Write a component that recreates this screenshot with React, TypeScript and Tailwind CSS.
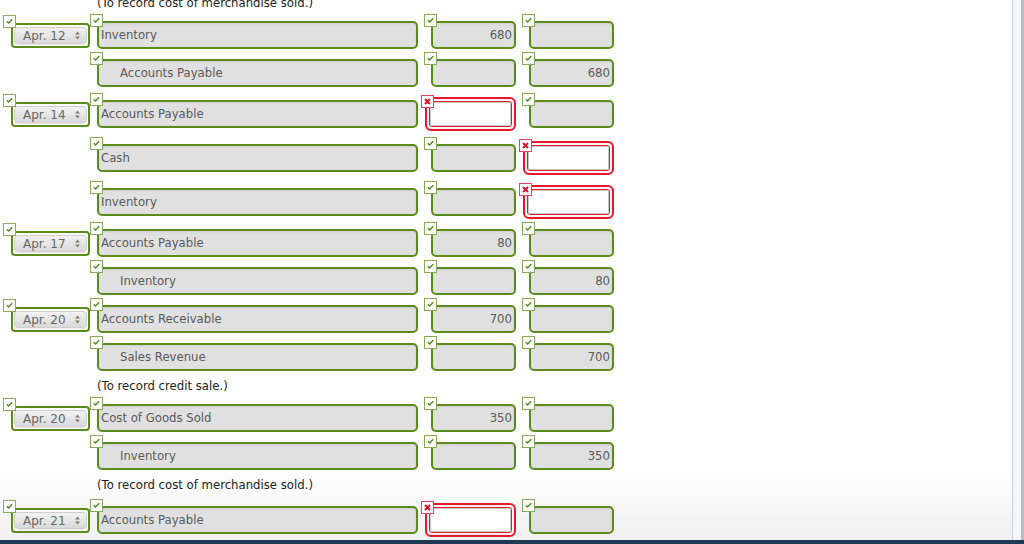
import React from "react";

type Cell = { text?: string; red?: boolean };
type Row = {
  kind: "row";
  date?: string;
  account: string;
  indent?: boolean;
  debit: Cell;
  credit: Cell;
};
type Note = { kind: "note"; text: string; first?: boolean };

const FONT = { fontFamily: '"DejaVu Sans", Verdana, sans-serif' };

function Check() {
  return (
    <svg width="13" height="13" viewBox="0 0 13 13" className="block">
      <rect x="0.5" y="0.5" width="12" height="12" fill="#fff" stroke="#86a95a" />
      <path d="M3.8 6.3 L5.6 8 L9.2 4.3" stroke="#4d8a1e" strokeWidth="1.4" fill="none" />
    </svg>
  );
}

function XMark() {
  return (
    <svg width="13" height="13" viewBox="0 0 13 13" className="block">
      <rect x="0.5" y="0.5" width="12" height="12" fill="#fff" stroke="#e8455a" />
      <path d="M4 4 L9 9 M9 4 L4 9" stroke="#e0102a" strokeWidth="2" fill="none" />
    </svg>
  );
}

function GreenBox({ text, align = "left", indent = false, width }: { text?: string; align?: "left" | "right"; indent?: boolean; width: string }) {
  return (
    <div className={`relative shrink-0 ${width}`}>
      <div className="absolute -left-[7px] -top-[7px] z-10">
        <Check />
      </div>
      <div
        className={`flex h-[28px] items-center rounded-[5px] border-2 border-[#5a8c1c] bg-[#e0e0e0] text-[11.7px] text-[#5a5a5a] shadow-[inset_0_1px_2px_rgba(0,0,0,0.08)] ${
          align === "right" ? "justify-end pr-[2px]" : indent ? "pl-[21px]" : "pl-[2px]"
        }`}
      >
        <span className="relative top-[1px]">{text}</span>
      </div>
    </div>
  );
}

function RedBox() {
  return (
    <div className="relative w-[91px] shrink-0">
      <div className="absolute -left-[4px] -top-[2px] z-10">
        <XMark />
      </div>
      <div className="h-[34px] rounded-[6px] border-2 border-[#e5182e] bg-[#fff4f5] p-[2px]">
        <div className="h-full rounded-[3px] border border-[#e5182e] bg-white p-0">
          <div className="h-full rounded-[2px] border border-[#c9c9c9] bg-white" />
        </div>
      </div>
    </div>
  );
}

function DateBox({ date }: { date: string }) {
  return (
    <div className="relative w-[79px] shrink-0">
      <div className="absolute -left-[8px] -top-[8px] z-10">
        <Check />
      </div>
      <div className="flex h-[25px] items-center rounded-[4px] border-2 border-[#5a8c1c] bg-white px-[1px]">
        <div className="flex h-[17px] w-full items-center justify-between rounded-[4px] border border-[#cfcfcf] bg-[linear-gradient(to_bottom,#f2f2f2,#d9d9d9)] pl-[8px] pr-[6px] text-[12px] text-[#666] shadow-[0_1px_1px_rgba(0,0,0,0.1)]">
          <span className="relative top-[1px]">{date}</span>
          <svg width="5" height="9" viewBox="0 0 5 9" className="block">
            <path d="M2.5 0.5 L4.8 3.6 L0.2 3.6 Z" fill="#777" />
            <path d="M2.5 8.5 L4.8 5.4 L0.2 5.4 Z" fill="#777" />
          </svg>
        </div>
      </div>
    </div>
  );
}

const items: (Row | Note)[] = [
  { kind: "note", text: "(To record cost of merchandise sold.)", first: true },
  { kind: "row", date: "Apr. 12", account: "Inventory", debit: { text: "680" }, credit: {} },
  { kind: "row", account: "Accounts Payable", indent: true, debit: {}, credit: { text: "680" } },
  { kind: "row", date: "Apr. 14", account: "Accounts Payable", debit: { red: true }, credit: {} },
  { kind: "row", account: "Cash", debit: {}, credit: { red: true } },
  { kind: "row", account: "Inventory", debit: {}, credit: { red: true } },
  { kind: "row", date: "Apr. 17", account: "Accounts Payable", debit: { text: "80" }, credit: {} },
  { kind: "row", account: "Inventory", indent: true, debit: {}, credit: { text: "80" } },
  { kind: "row", date: "Apr. 20", account: "Accounts Receivable", debit: { text: "700" }, credit: {} },
  { kind: "row", account: "Sales Revenue", indent: true, debit: {}, credit: { text: "700" } },
  { kind: "note", text: "(To record credit sale.)" },
  { kind: "row", date: "Apr. 20", account: "Cost of Goods Sold", debit: { text: "350" }, credit: {} },
  { kind: "row", account: "Inventory", indent: true, debit: {}, credit: { text: "350" } },
  { kind: "note", text: "(To record cost of merchandise sold.)" },
  { kind: "row", date: "Apr. 21", account: "Accounts Payable", debit: { red: true }, credit: {} },
];

function AmountCell({ cell }: { cell: Cell }) {
  if (cell.red) return <div className="ml-[7px]"><RedBox /></div>;
  return (
    <div className="ml-[13px]">
      <GreenBox text={cell.text} align="right" width="w-[85px]" />
    </div>
  );
}

export default function App() {
  return (
    <div className="flex h-[544px] w-[1024px] flex-col overflow-hidden bg-white" style={FONT}>
      <div className="flex h-[540px] w-full">
        <div className="h-full w-[1012px] overflow-hidden bg-[linear-gradient(to_bottom,#ffffff_0px,#ffffff_470px,#f0f0f0_540px)]">
          <div className="flex flex-col gap-[10px]">
            {items.map((it, i) =>
              it.kind === "note" ? (
                <div
                  key={i}
                  className={`h-[13px] pl-[97px] text-[11.7px] leading-[13px] text-[#222] ${it.first ? "-mt-[2px]" : ""}`}
                >
                  <span className="relative -top-[1px]">{it.text}</span>
                </div>
              ) : (
                <div key={i} className="flex items-center pl-[11px]">
                  {it.date ? <DateBox date={it.date} /> : <div className="w-[79px] shrink-0" />}
                  <div className="ml-[7px]">
                    <GreenBox text={it.account} indent={it.indent} width="w-[321px]" />
                  </div>
                  <AmountCell cell={it.debit} />
                  <AmountCell cell={it.credit} />
                </div>
              )
            )}
          </div>
        </div>
        <div className="h-full w-[1px] bg-[#c8d0e2]" />
        <div className="h-full w-[8px] bg-[#f4f6fa]" />
        <div className="h-full w-[3px] bg-[#bdbdbd]" />
      </div>
      <div className="h-[4px] w-full bg-[#1e3a52]" />
    </div>
  );
}
